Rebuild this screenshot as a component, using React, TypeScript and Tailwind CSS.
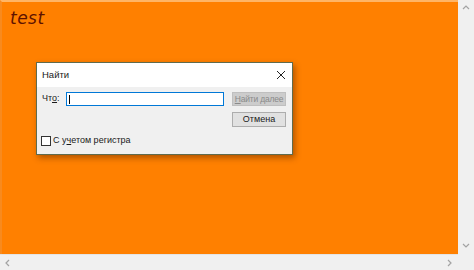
export default function App() {
  return (
    <div className="w-[474px] h-[270px] flex flex-col bg-[#f0f0f0] overflow-hidden font-['Liberation_Sans',Arial,sans-serif]">
      <div className="flex h-[254px]">
        <div className="relative w-[458px] h-full bg-[#ff8000] border-t-2 border-t-[#ffb566] border-l-2 border-l-[#f88a1e]">
          <div className="pl-[8px] pt-[8px] text-[17px] italic text-[#5e1200] font-['DejaVu_Sans',sans-serif] tracking-[0.5px] leading-none">
            test
          </div>
          <FindDialog />
        </div>
        <div className="w-[16px] h-full flex flex-col items-center justify-between py-[4px] bg-[#f0f0f0]">
          <Chevron dir="up" />
          <Chevron dir="down" />
        </div>
      </div>
      <div className="flex h-[16px]">
        <div className="w-[458px] h-full flex items-center justify-between px-[4px] bg-[#f0f0f0] border-t border-[#e4e4e4]">
          <Chevron dir="left" />
          <Chevron dir="right" />
        </div>
        <div className="w-[16px] h-full bg-[#f0f0f0]" />
      </div>
    </div>
  );
}

const Chevron = ({ dir }: { dir: "up" | "down" | "left" | "right" }) => {
  const paths = {
    up: "M1 5 L4 2 L7 5",
    down: "M1 2 L4 5 L7 2",
    left: "M5 1 L2 4 L5 7",
    right: "M2 1 L5 4 L2 7",
  };
  return (
    <svg width="8" height="8" viewBox="0 0 8 8">
      <path d={paths[dir]} fill="none" stroke="#a3a3a3" strokeWidth="1.2" />
    </svg>
  );
};

const FindDialog = () => {
  return (
    <div className="absolute left-[34px] top-[60px] w-[257px] h-[93px] flex flex-col bg-[#f0f0f0] border border-[#5f6b4e] shadow-[2px_3px_6px_rgba(80,30,0,0.45)] text-[9px] text-[#1a1a1a]">
      <div className="h-[24px] flex items-center justify-between bg-white pl-[5px] pr-[6px]">
        <span className="text-[9.5px]">Найти</span>
        <svg width="10" height="10" viewBox="0 0 10 10">
          <path d="M1 1 L9 9 M9 1 L1 9" stroke="#222" strokeWidth="1" />
        </svg>
      </div>
      <div className="flex-1 flex flex-col px-[4px] pt-[5px]">
        <div className="flex items-center h-[14px]">
          <span className="w-[25px] pl-[1px]">
            Чт<span className="underline">о</span>:
          </span>
          <div className="w-[158px] h-[14px] bg-white border border-[#0078d7] flex items-center pl-[2px]">
            <div className="w-px h-[9px] bg-black" />
          </div>
          <button className="ml-[8px] w-[54px] h-[14px] bg-[#cccccc] border border-[#bfbfbf] text-[#8a8a8a] text-[8.5px] leading-none whitespace-nowrap tracking-[-0.2px]">
            <span className="underline">Н</span>айти далее
          </button>
        </div>
        <div className="flex justify-end pr-[2px] mt-[6px]">
          <button className="w-[54px] h-[15px] bg-[#e1e1e1] border border-[#adadad] text-[9px] leading-none">
            Отмена
          </button>
        </div>
        <label className="flex items-center gap-[2px] mt-[7px]">
          <span className="w-[10px] h-[10px] border border-[#333] bg-white" />
          <span>
            С у<span className="underline">ч</span>етом регистра
          </span>
        </label>
      </div>
    </div>
  );
}
